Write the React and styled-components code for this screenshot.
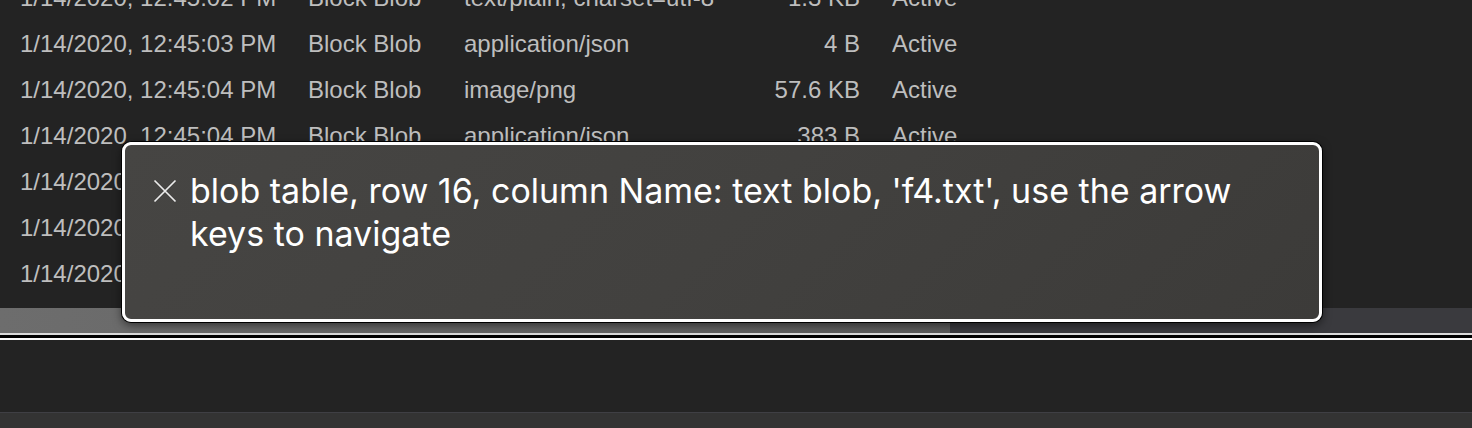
import React from 'react';
import styled, { createGlobalStyle } from 'styled-components';

const GlobalStyle = createGlobalStyle`
  html, body {
    margin: 0;
    padding: 0;
    background: #232323;
    overflow: hidden;
  }
`;

const Page = styled.div`
  position: relative;
  display: flex;
  flex-direction: column;
  width: 1472px;
  height: 428px;
  background: #232323;
  font-family: "Liberation Sans", Arial, sans-serif;
`;

const TablePane = styled.div`
  height: 308px;
  overflow: hidden;
`;

const RowList = styled.div`
  display: flex;
  flex-direction: column;
  margin-top: -25px;
`;

const Row = styled.div`
  display: grid;
  grid-template-columns: 288px 156px 300px 96px 32px 1fr;
  align-items: center;
  height: 46px;
  padding-left: 20px;
  font-size: 24px;
  color: #bebebe;
  white-space: nowrap;
`;

const Cell = styled.div`
  overflow: hidden;
  text-align: ${(p) => (p.$right ? 'right' : 'left')};
`;

const Scrollbar = styled.div`
  display: flex;
  height: 25px;
  background: #3a3a3e;
`;

const Thumb = styled.div`
  width: 950px;
  background: linear-gradient(90deg, #6d6d6d 0%, #646464 60%, #5b5b5b 100%);
`;

const Divider = styled.div`
  height: 3px;
  background: #000;
  border-top: 2px solid #dadada;
  border-bottom: 2px solid #fafafa;
`;

const BottomPane = styled.div`
  height: 72px;
  background: #232323;
`;

const Footer = styled.div`
  flex: 1;
  background: #333333;
  border-top: 1px solid #3f3f44;
`;

const Announcement = styled.div`
  position: absolute;
  left: 122px;
  top: 142px;
  box-sizing: border-box;
  width: 1200px;
  height: 180px;
  display: flex;
  align-items: flex-start;
  gap: 13px;
  padding: 24px 40px 0 28px;
  border: 3px solid #ffffff;
  border-radius: 9px;
  background: linear-gradient(135deg, #464543 0%, #42413f 50%, #3c3b39 100%);
  box-shadow: 0 0 0 1px #000, 0 3px 10px rgba(0, 0, 0, 0.55);
`;

const CloseIcon = styled.svg`
  flex: none;
  width: 24px;
  height: 24px;
  margin-top: 10px;
`;

const Message = styled.div`
  font-family: Inter, "Open Sans", sans-serif;
  font-size: 34px;
  line-height: 43px;
  color: #ffffff;
`;

const rows = [
  ['1/14/2020, 12:45:02 PM', 'Block Blob', 'text/plain; charset=utf-8', '1.3 KB', 'Active'],
  ['1/14/2020, 12:45:03 PM', 'Block Blob', 'application/json', '4 B', 'Active'],
  ['1/14/2020, 12:45:04 PM', 'Block Blob', 'image/png', '57.6 KB', 'Active'],
  ['1/14/2020, 12:45:04 PM', 'Block Blob', 'application/json', '383 B', 'Active'],
  ['1/14/2020, 12:45:05 PM', 'Block Blob', 'text/plain', '12 B', 'Active'],
  ['1/14/2020, 12:45:05 PM', 'Block Blob', 'text/plain', '18 B', 'Active'],
  ['1/14/2020, 12:45:06 PM', 'Block Blob', 'text/plain', '9 B', 'Active'],
];

function App() {
  return (
    <Page>
      <GlobalStyle />
      <TablePane>
        <RowList>
          {rows.map((r, i) => (
            <Row key={i}>
              <Cell>{r[0]}</Cell>
              <Cell>{r[1]}</Cell>
              <Cell>{r[2]}</Cell>
              <Cell $right>{r[3]}</Cell>
              <span />
              <Cell>{r[4]}</Cell>
            </Row>
          ))}
        </RowList>
      </TablePane>
      <Scrollbar>
        <Thumb />
      </Scrollbar>
      <Divider />
      <BottomPane />
      <Footer />
      <Announcement role="status">
        <CloseIcon viewBox="0 0 24 24" aria-hidden="true">
          <path d="M1.5 1.5 L22.5 22.5 M22.5 1.5 L1.5 22.5" stroke="#ececec" strokeWidth="1.7" fill="none" />
        </CloseIcon>
        <Message>
          blob table, row 16, column Name: text blob, 'f4.txt', use the arrow keys to navigate
        </Message>
      </Announcement>
    </Page>
  );
}

export default App;
